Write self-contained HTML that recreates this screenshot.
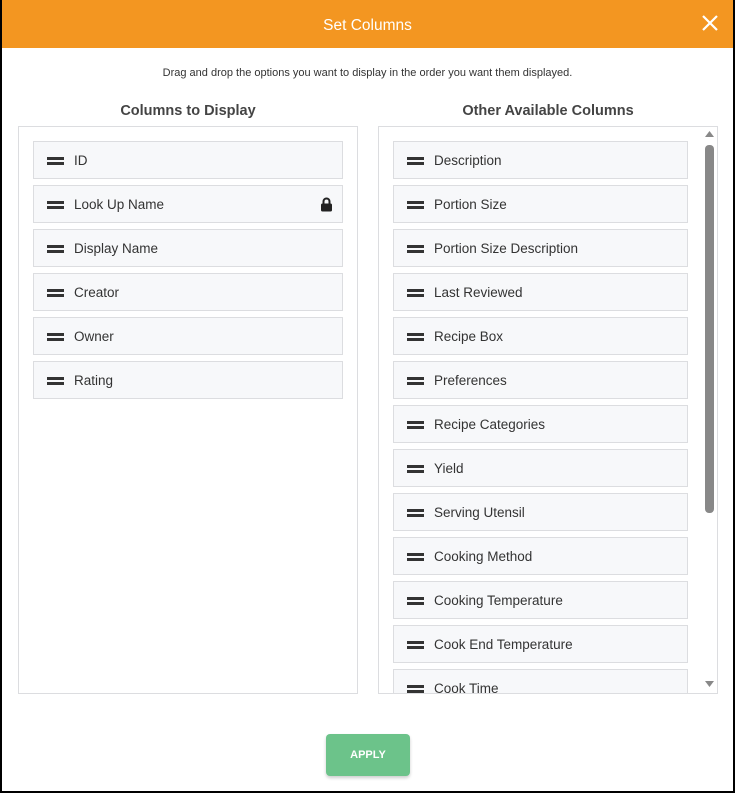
<!DOCTYPE html>
<html><head><style>
*{box-sizing:border-box;margin:0;padding:0}
body{width:735px;height:793px;background:#000;font-family:"Liberation Sans",sans-serif;position:relative;overflow:hidden}
.win{position:absolute;left:2px;top:0;width:731px;height:791px;background:#fff}
.hdr{position:absolute;left:0;top:0;width:731px;height:48px;background:#f39621;color:#fff;font-size:15.5px;text-align:center;line-height:51px}
.x{position:absolute;right:14px;top:14px;width:18px;height:18px}
.sub{position:absolute;top:67px;width:731px;text-align:center;font-size:11px;color:#333}
.h{position:absolute;top:103px;font-size:14.5px;font-weight:bold;color:#444;text-align:center;width:340px}
.panel{position:absolute;top:126px;width:340px;height:568px;border:1px solid #dcdde0;overflow:hidden}
.it{position:absolute;left:14px;width:310px;height:38px;background:#f7f8fa;border:1px solid #dcdde0;font-size:13.5px;color:#333;line-height:37px;padding-left:40px}
.r .it{width:295px}
.it::before{content:"";position:absolute;left:13px;top:15px;width:17px;height:2.5px;background:#333;box-shadow:0 5px 0 #333}
.thumb{position:absolute;left:326px;top:18px;width:9px;height:368px;background:#888;border-radius:4px}
.btn{position:absolute;left:324px;top:734px;width:84px;height:42px;background:#6cc38a;border-radius:4px;color:#fff;font-weight:bold;font-size:11px;text-align:center;line-height:42px;box-shadow:0 2px 3px rgba(0,0,0,.2)}
</style></head><body>
<div class="win">
<div class="hdr">Set Columns
<svg class="x" viewBox="0 0 18 18"><path d="M2 2L16 16M16 2L2 16" stroke="#fff" stroke-width="2.2"/></svg></div>
<div class="sub">Drag and drop the options you want to display in the order you want them displayed.</div>
<div class="h" style="left:16px">Columns to Display</div>
<div class="h" style="left:376px">Other Available Columns</div>
<div class="panel" style="left:16px">
<div class="it" style="top:14px">ID</div>
<div class="it" style="top:58px">Look Up Name<svg style="position:absolute;right:9px;top:11px" width="13" height="15" viewBox="0 0 13 15"><path d="M3.5 7V4.5a3 3 0 0 1 6 0V7" stroke="#222" stroke-width="2" fill="none"/><rect x="1" y="6.5" width="11" height="8" rx="1.5" fill="#222"/></svg></div>
<div class="it" style="top:102px">Display Name</div>
<div class="it" style="top:146px">Creator</div>
<div class="it" style="top:190px">Owner</div>
<div class="it" style="top:234px">Rating</div>
</div>
<div class="panel r" style="left:376px">
<div class="it" style="top:14px">Description</div>
<div class="it" style="top:58px">Portion Size</div>
<div class="it" style="top:102px">Portion Size Description</div>
<div class="it" style="top:146px">Last Reviewed</div>
<div class="it" style="top:190px">Recipe Box</div>
<div class="it" style="top:234px">Preferences</div>
<div class="it" style="top:278px">Recipe Categories</div>
<div class="it" style="top:322px">Yield</div>
<div class="it" style="top:366px">Serving Utensil</div>
<div class="it" style="top:410px">Cooking Method</div>
<div class="it" style="top:454px">Cooking Temperature</div>
<div class="it" style="top:498px">Cook End Temperature</div>
<div class="it" style="top:542px">Cook Time</div>
<div class="thumb"></div>
<svg style="position:absolute;left:326px;top:4px" width="9" height="7"><path d="M0 6L4.5 0L9 6Z" fill="#888"/></svg>
<svg style="position:absolute;left:326px;top:554px" width="9" height="7"><path d="M0 0L4.5 6L9 0Z" fill="#888"/></svg>
</div>
<div class="btn">APPLY</div>
</div>
</body></html>
